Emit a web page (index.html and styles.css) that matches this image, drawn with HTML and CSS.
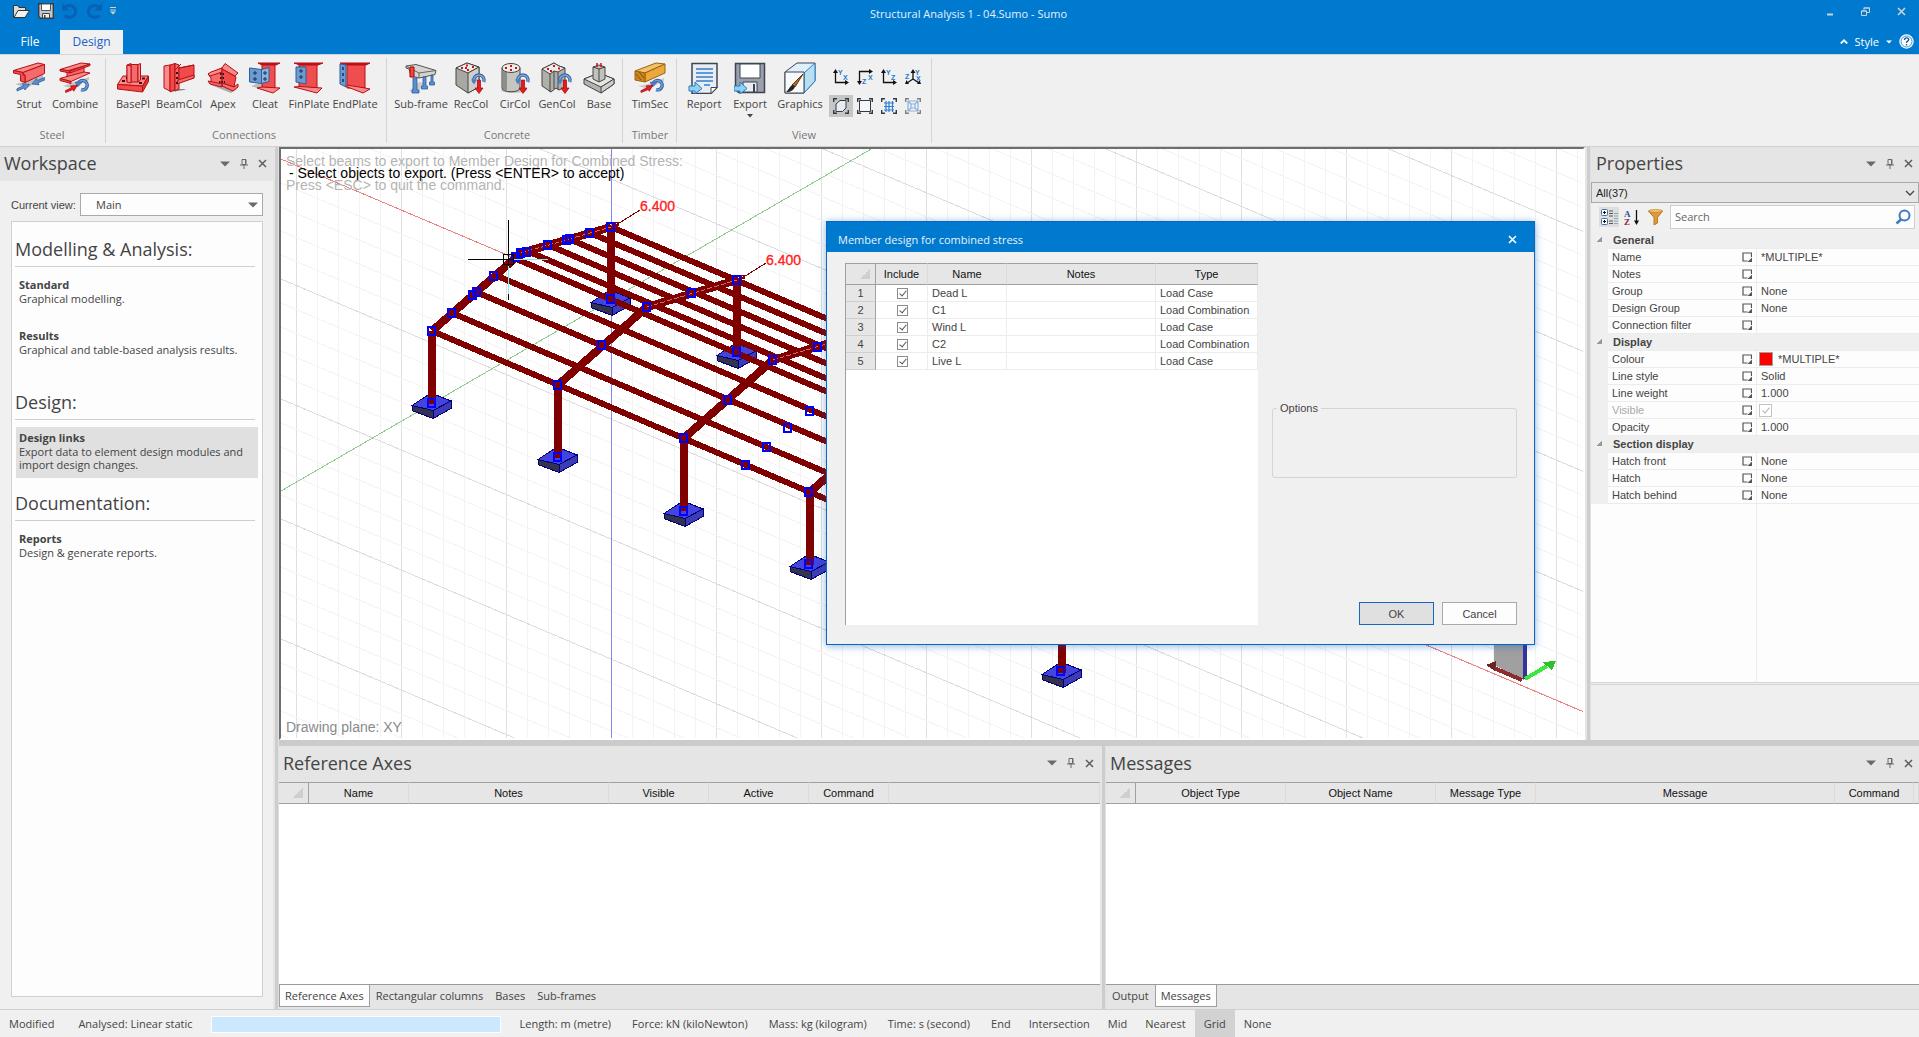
FILE: index.html
```html
<!DOCTYPE html>
<html lang="en">
<head>
<meta charset="utf-8">
<title>Structural Analysis 1 - 04.Sumo - Sumo</title>
<link rel="stylesheet" href="styles.css">
</head>
<body>
<svg class="defs" width="0" height="0" aria-hidden="true">
  <defs>
    <symbol id="i-menu" viewBox="0 0 10 6"><path d="M0 .5h10L5 5.500z" fill="#6a6a6a"/></symbol>
    <symbol id="i-pin" viewBox="0 0 8 10"><path d="M2 .5h4v5H2zM0 6h8M4 6v4M5.500 1v4" fill="none" stroke="#6a6a6a"/></symbol>
    <symbol id="i-close" viewBox="0 0 9 9"><path d="M1 1l7 7M8 1L1 8" fill="none" stroke="#5e5e5e" stroke-width="1.500"/></symbol>
    <symbol id="i-edit" viewBox="0 0 10 10"><path d="M9.500 5V1H1v8h4.500" fill="none" stroke="#555" stroke-width="1.200"/><path d="M10 5.500V10H5.500z" fill="#555"/></symbol>
    <symbol id="curl" viewBox="0 0 16 16"><path d="M3.500 6.500a5 5 0 1 1 3 7" fill="none" stroke="#2f5d9f" stroke-width="3.600"/><path d="M3.500 6.500a5 5 0 1 1 3 7" fill="none" stroke="#6b9bd8" stroke-width="1.800"/><path d="M0 5.500h7.500L3 10.500z" fill="#4c7fc4" stroke="#2f5d9f" stroke-width=".6"/></symbol>
    <symbol id="redarrow" viewBox="0 0 14 9"><path d="M.5 8.500L0 6.500 7 3 6 1l7.500-.5L9.500 7l-1-2z" fill="#e81c24" stroke="#a80008" stroke-width=".8"/></symbol>
    <symbol id="down" viewBox="0 0 16 22"><path d="M3 10a5.200 5.200 0 1 1 9.800 0" fill="none" stroke="#2f5d9f" stroke-width="3.400"/><path d="M3 10a5.200 5.200 0 1 1 9.800 0" fill="none" stroke="#78a4dc" stroke-width="1.700"/><path d="M0 7.500h6l-3 5z" fill="#4c7fc4"/><path d="M6.500 8h3v8h2.500L8 21.500 4 16h2.500z" fill="#e31b23" stroke="#a80008" stroke-width=".7"/></symbol>
    <symbol id="frame" viewBox="0 0 16 16"><path d="M.7 4V.7H4M12 .7h3.300V4M15.300 12v3.300H12M4 15.300H.7V12" fill="none" stroke="#333a44" stroke-width="1.400"/></symbol>
  </defs>
</svg>

<header class="titlebar">
  <div class="quick">
    <button aria-label="Open"><svg width="17" height="15" viewBox="0 0 17 15"><path d="M.5 13.500V1.500h4l1.500 2h6.500v3" fill="#ddd" stroke="#333"/><path d="M1 13.500L5 6.500h11.500L12 13.500z" fill="#f2f2f2" stroke="#333"/></svg></button>
    <button aria-label="Save"><svg width="16" height="16" viewBox="0 0 16 16"><path d="M.7.7h14.600v14.600H2.500L.7 13.500z" fill="#c4c8ce" stroke="#333a44" stroke-width="1.400"/><path d="M3.500 1h9v6.500h-9z" fill="#fff" stroke="#555"/><path d="M4.500 10.500h7v4.500h-7z" fill="#eee" stroke="#444"/><path d="M6 12h1.500v3H6z" fill="#444"/></svg></button>
    <button aria-label="Undo"><svg width="16" height="16" viewBox="0 0 16 16"><path d="M2.500 4.500C6 1 13.500 2 13.500 8.500S6 15.500 2.500 12.500" fill="none" stroke="#0a61b4" stroke-width="3"/><path d="M0 0v7.500h7.500z" fill="#0a61b4"/></svg></button>
    <button aria-label="Redo"><svg width="16" height="16" viewBox="0 0 16 16"><path d="M13.500 4.500C10 1 2.500 2 2.500 8.500s7.500 7 11 4" fill="none" stroke="#0a61b4" stroke-width="3"/><path d="M16 0v7.500H8.500z" fill="#0a61b4"/></svg></button>
    <button aria-label="Customise toolbar"><svg width="6" height="8" viewBox="0 0 6 8"><path d="M0 .5h6M0 3h6" stroke="#d6d0c8"/><path d="M0 4.500h6L3 7.500z" fill="#d6d0c8"/></svg></button>
  </div>
  <h1>Structural Analysis 1 - 04.Sumo - Sumo</h1>
  <div class="winbtns">
    <button aria-label="Minimise"><svg width="8" height="8" viewBox="0 0 8 8"><path d="M1 6.500h6" stroke="#c9d3dc" stroke-width="2"/></svg></button>
    <button aria-label="Restore"><svg width="9" height="9" viewBox="0 0 9 9"><path d="M.5 4h5v4.500h-5zM0 4h6M3 3V1h5.500v4.500H6M2.500 1H9" fill="none" stroke="#c9d3dc"/></svg></button>
    <button aria-label="Close"><svg width="9" height="9" viewBox="0 0 9 9"><path d="M1 1l7 7M8 1L1 8" stroke="#c9d3dc" stroke-width="1.600"/></svg></button>
  </div>
</header>
<nav class="tabs">
  <button class="tab">File</button>
  <button class="tab active">Design</button>
  <div class="tabs-right">
    <svg width="8" height="5" viewBox="0 0 8 5"><path d="M.8 4.500L4 1.300l3.200 3.200" fill="none" stroke="#fff" stroke-width="1.800"/></svg>
    <button class="style-btn">Style</button>
    <svg width="6" height="4" viewBox="0 0 6 4"><path d="M0 .5h6l-3 3z" fill="#fff"/></svg>
    <button aria-label="Help"><svg width="15" height="15" viewBox="0 0 15 15"><circle cx="7.500" cy="7.500" r="7.200" fill="#fff"/><circle cx="7.500" cy="7.500" r="5.500" fill="none" stroke="#0078d0" stroke-width=".8"/><path d="M5.500 6c0-3 4.200-2.600 4.200-.3 0 1.500-2.200 1.500-2.200 3.200M7.500 10v1.500" fill="none" stroke="#1f5c8f" stroke-width="1.400"/></svg></button>
  </div>
</nav>

<section class="ribbon">
  <div class="group steel">
    <div class="tools">
      <button class="tool"><svg width="32" height="32" viewBox="0 0 32 32"><path d="M2 22l10-2 18-8v4L14 26z" fill="#bbb"/><g stroke="#b80f14" stroke-linejoin="round"><path d="M.5 8.500L25 1l6.500 1.500L10 10.500z" fill="#f98a8a"/><path d="M10 10.500l21.500-8v9L12 20.500V13l-2 0z" fill="#f56a6a"/><path d="M.5 8.500l9.500 2V13h2v7.500l-4.500-1.500v-6.500L.5 11z" fill="#f25050"/></g><g fill="#5b8fd0" stroke="#2f5d9f" stroke-width=".8"><path d="M31.500 15.500l-7 3-1-2-4.500 5.500 7 .8-1-2 7-3z"/><path d="M4 29l7-3 1 2 4.500-5.500-7-.8 1 2-6.500 3z"/></g></svg>Strut</button>
      <button class="tool"><svg width="32" height="32" viewBox="0 0 32 32"><path d="M4 24l8-3 18-6v3L12 26z" fill="#c4c4c4"/><g stroke="#b80f14" stroke-linejoin="round"><path d="M1 7.500L22 1l9 1L11 9z" fill="#f98a8a"/><path d="M8 9l17-5v8L8 17z" fill="#f56a6a"/><path d="M1 16.500l7-2 17-4.500 6 1-19 8.500z" fill="#f98a8a"/><path d="M1 7.500l10 1.500v2L1 9zM1 16.500l11 3v2l-11-3zM11 9l20-7v1.500L11 11z" fill="#f25050"/></g><use href="#curl" x="16" y="15" width="15" height="15"/><use href="#redarrow" x="6" y="23" width="13" height="8"/></svg>Combine</button>
    </div>
    <div class="caption">Steel</div>
  </div>
  <div class="group connections">
    <div class="tools">
      <button class="tool"><svg width="32" height="32" viewBox="0 0 32 32"><g stroke="#b80f14" stroke-linejoin="round"><path d="M.5 22.500L6 14h25.500l-6 10z" fill="#f98a8a"/><path d="M.5 22.500l25 1.500v6L.5 27z" fill="#f04a4a"/><path d="M25.500 24l6-10v5.500l-6 10.500z" fill="#e03030"/><path d="M10 3l4-1.500v17L10 20z" fill="#f04a4a"/><path d="M14 2.500h7V20h-7z" fill="#f56a6a"/><path d="M10 3v17l4 1V4zM21 2.500l2.500-1V18L21 20z" fill="#f98a8a"/></g><path d="M5 19h3M25 16.500h3M22 21h3M9 16h1" stroke="#401010" stroke-width="2"/></svg>BasePl</button>
      <button class="tool"><svg width="32" height="32" viewBox="0 0 32 32"><path d="M7 30l4-3h12l-2 1z" fill="#888"/><g stroke="#b80f14" stroke-linejoin="round"><path d="M1 4l6-1v26l-6-3z" fill="#f98a8a"/><path d="M7 3l5-1.500v26L7 30z" fill="#f04a4a"/><path d="M12 1.500l4 1.500v24l-4 2z" fill="#f56a6a"/><path d="M16 6l15-3v13l-15 4z" fill="#f04a4a"/><path d="M12 8l6-6M16 6l15-3M14 22l17-6v-3l-16 5z" fill="#f56a6a"/></g><path d="M13 11h2M13 16h2M13 21h2" stroke="#301010" stroke-width="2"/></svg>BeamCol</button>
      <button class="tool narrow"><svg width="32" height="32" viewBox="0 0 32 32"><path d="M4 23l14-1 12 5-6 4z" fill="#aaa"/><g stroke="#b80f14" stroke-linejoin="round"><path d="M1 12l14-6v18L4 21v-5z" fill="#f56a6a"/><path d="M1 12l3-2 11-4v4L3 14z" fill="#f98a8a"/><path d="M15 6l3-4.500L31 11l-3 3-13-7z" fill="#f98a8a"/><path d="M15 7l14 8-2 10-12-4z" fill="#f04a4a"/><path d="M15 21l12 4 4-3v3l-5 4-11-5zM1 19l14 3v3L3 22z" fill="#f56a6a"/></g><path d="M13 12h4M13 16h4M12 20h6" stroke="#301010" stroke-width="2" stroke-dasharray="1.500 1"/></svg>Apex</button>
      <button class="tool narrow"><svg width="32" height="32" viewBox="0 0 32 32"><path d="M2 24l8-3 8 5-4 2z" fill="#bbb"/><g stroke="#b80f14" stroke-linejoin="round"><path d="M9 1h22l-4 2H13z" fill="#c01218"/><path d="M13 3h13v23H13z" fill="#f04e4e"/><path d="M8 26l5-1 18 1-7 5z" fill="#f98a8a"/></g><path d="M.5 6l12 1.500v14L.5 20z" fill="#6c9bd2" stroke="#2f5d9f"/><path d="M12.500 7.500L20 5.500v14l-7.500 2z" fill="#8bb2e0" stroke="#2f5d9f"/><path d="M6 9v4M4 11h4M6 15v4M4 17h4M16 9v4M14 11h4M16 15v4M14 17h4" stroke="#16324f"/></svg>Cleat</button>
      <button class="tool"><svg width="32" height="32" viewBox="0 0 32 32"><g stroke="#b80f14" stroke-linejoin="round"><path d="M1 1h29l-5 2H7z" fill="#c01218"/><path d="M6 3h18v23H6z" fill="#f04e4e"/><path d="M1 25l6-.5 22 1.500-5 5z" fill="#f98a8a"/></g><path d="M3 5h10v17l-10-2z" fill="#6c9bd2" stroke="#2f5d9f"/><path d="M8 7v4M6 9h4M8 13v4M6 15h4" stroke="#16324f"/></svg>FinPlate</button>
      <button class="tool"><svg width="32" height="32" viewBox="0 0 32 32"><g stroke="#b80f14" stroke-linejoin="round"><path d="M1 1h30l-4 2H8z" fill="#c01218"/><path d="M8 3h18v23H8z" fill="#f04e4e"/><path d="M8 23l-2 1 18 7 7-4-5-1z" fill="#f98a8a"/></g><path d="M1 2l6 1v22l-6-3z" fill="#6c9bd2" stroke="#2f5d9f"/><path d="M4 5v3M4 11v3M4 17v3" stroke="#16324f" stroke-width="1.500"/></svg>EndPlate</button>
    </div>
    <div class="caption">Connections</div>
  </div>
  <div class="group concrete">
    <div class="tools">
      <button class="tool wide"><svg width="32" height="32" viewBox="0 0 32 32"><path d="M4 29l10-9 6 1-8 10z" fill="#ccc"/><path d="M1 4l10-1.500 20 6-1 4-16 3.500-8-2-2-7-3-1z" fill="#d4d4d0" stroke="#555"/><path d="M1 4l13 7 17-2.500M14 11v5" stroke="#666" fill="none"/><path d="M5 5h4v10H5z" fill="#e84c3d" stroke="#a00"/><path d="M8 16h4v12h2v3H7v-3h1zM18 15h3v9h1.500v3h-6v-3H18zM26 13h2v7h1.500v3h-5v-3H26z" fill="#5b8fd0" stroke="#2f5d9f" stroke-width=".8"/></svg>Sub-frame</button>
      <button class="tool"><svg width="32" height="32" viewBox="0 0 32 32"><path d="M1 6l11-5 12 4v20l-11 6-12-8z" fill="#a8a8a2" stroke="#444"/><path d="M1 6l11-5 12 4-11 6z" fill="#ecece8" stroke="#444"/><path d="M13 11l11-6v20l-11 6z" fill="#d0d0cb" stroke="#444"/><path d="M6 6h2M11 3.500h2M17 5h2M12 8h2M10 6h2" stroke="#d01018" stroke-width="2"/><use href="#down" x="16" y="10" width="16" height="22"/></svg>RecCol</button>
      <button class="tool narrow"><svg width="32" height="32" viewBox="0 0 32 32"><ellipse cx="15" cy="28" rx="13" ry="3" fill="#c4c4c4"/><path d="M3 6v20c0 5 18 5 18 0V6z" fill="#c6c6c1" stroke="#444"/><path d="M4 9v18l4 2V10z" fill="#8e8e89"/><ellipse cx="12" cy="6" rx="9" ry="4.500" fill="#ecece8" stroke="#444"/><path d="M6 6h2M11 4h2M16 6h2M11 8h2" stroke="#d01018" stroke-width="2"/><use href="#down" x="16" y="10" width="16" height="22"/></svg>CirCol</button>
      <button class="tool narrow"><svg width="32" height="32" viewBox="0 0 32 32"><path d="M1 7l12-6 5 3 6 2v19l-6 3-3-2-5 4-9-6z" fill="#b0b0aa" stroke="#444"/><path d="M1 7l12-6 5 3 6 2-7 4-4-1-4 3z" fill="#ecece8" stroke="#444"/><path d="M9 12v18M13 9v18M17 10v18" stroke="#444" fill="none"/><path d="M6 7h2M12 4h2M17 6.500h2M9 9h2" stroke="#d01018" stroke-width="2"/><use href="#down" x="16" y="10" width="16" height="22"/></svg>GenCol</button>
      <button class="tool narrow"><svg width="32" height="32" viewBox="0 0 32 32"><path d="M1 17l15-6 15 6v5l-13 9L1 22z" fill="#b4b4ae" stroke="#444"/><path d="M1 17l15-6 15 6-13 8z" fill="#e6e6e2" stroke="#444"/><path d="M18 25l13-8v5l-13 9z" fill="#cfcfca" stroke="#444"/><path d="M10 5l6-2 6 2v12l-6 3-6-3z" fill="#c2c2bc" stroke="#444"/><path d="M10 5l6 2 6-2M16 7v13" fill="none" stroke="#444"/><path d="M14 1v4M18 1v4" stroke="#d01018" stroke-width="1.500"/></svg>Base</button>
    </div>
    <div class="caption">Concrete</div>
  </div>
  <div class="group timber">
    <div class="tools">
      <button class="tool"><svg width="32" height="32" viewBox="0 0 32 32"><path d="M4 24l10-2 16-6v3L14 27z" fill="#ccc"/><path d="M1 9l21-8 9 1-20 9z" fill="#f4c06a" stroke="#9a6210"/><path d="M11 11l20-9v9l-20 9z" fill="#eda83c" stroke="#9a6210"/><path d="M1 9l10 2v9L1 18z" fill="#c8861c" stroke="#9a6210"/><path d="M2 12l5 6M5 10l5 6" stroke="#8a5208"/><use href="#curl" x="16" y="15" width="15" height="15"/><use href="#redarrow" x="6" y="23" width="14" height="8"/></svg>TimSec</button>
    </div>
    <div class="caption">Timber</div>
  </div>
  <div class="group view">
    <div class="tools">
      <button class="tool"><svg width="32" height="32" viewBox="0 0 32 32"><path d="M4 1.500h25v24l-6 6H4z" fill="#e9edf1" stroke="#3d4552" stroke-width="1.500"/><path d="M29 25.500l-6 6v-6z" fill="#fff" stroke="#3d4552"/><path d="M8 7h17M8 11h17M8 15h17M8 19h17M16 23h6" stroke="#2f7fd0" stroke-width="1.500"/><path d="M1 24h6v-4l7 6.500L7 32v-3H1z" fill="#8fd0f5" stroke="#2a7ab8"/></svg>Report</button>
      <button class="tool"><svg width="32" height="32" viewBox="0 0 32 32"><path d="M1.500 1.500h29v29h-26l-3-3z" fill="#9aa1ab" stroke="#3d4552" stroke-width="1.500"/><path d="M6 2h20v14H6z" fill="#fff" stroke="#3d4552"/><path d="M9 20h14v10H9z" fill="#e9edf1" stroke="#3d4552"/><path d="M19 22h2v8h-2z" fill="#3d4552"/><path d="M0 24h6v-4l7 6.500L6 32v-3H0z" fill="#8fd0f5" stroke="#2a7ab8"/></svg>Export<svg class="drop" width="6" height="4" viewBox="0 0 6 4"><path d="M0 0h6L3 3.500z" fill="#444"/></svg></button>
      <button class="tool wide"><svg width="32" height="32" viewBox="0 0 32 32"><path d="M1 10L13 1h18v18l-11 12H1z" fill="#dff0fa" stroke="#3d4552"/><path d="M20 11L31 1v18L20 31z" fill="#b8def2" stroke="#2f7fd0"/><path d="M1 10h19v21H1z" fill="#f7f9fa" stroke="#3d4552"/><path d="M19 12l-8 13-3-2z" fill="#b06c28" stroke="#5a3510"/><path d="M11 24c-1 4-4 6-9 6 3-2 3-5 6-7z" fill="#222"/></svg>Graphics</button>
      <div class="small">
        <button aria-label="View XY"><svg width="16" height="16" viewBox="0 0 16 16"><path d="M2.500 2v11.500H14" fill="none" stroke="#111" stroke-width="1.300"/><path d="M0 4l2.500-4L5 4zM12 11l4 2.500-4 2.500z" fill="#111"/><text class="axis" x="5" y="6">Y</text><text class="axis" x="10" y="11">X</text></svg></button>
        <button aria-label="View XZ"><svg width="16" height="16" viewBox="0 0 16 16"><path d="M2.500 14V2.500H14" fill="none" stroke="#111" stroke-width="1.300"/><path d="M0 12l2.500 4L5 12zM12 0l4 2.500L12 5z" fill="#111"/><text class="axis" x="5" y="15">Z</text><text class="axis" x="11" y="11">X</text></svg></button>
        <button aria-label="View YZ"><svg width="16" height="16" viewBox="0 0 16 16"><path d="M2.500 2v11.500H14" fill="none" stroke="#111" stroke-width="1.300"/><path d="M0 4l2.500-4L5 4zM12 11l4 2.500-4 2.500z" fill="#111"/><text class="axis" x="5" y="6">Y</text><text class="axis" x="10" y="11">Z</text></svg></button>
        <button aria-label="View 3D"><svg width="16" height="16" viewBox="0 0 16 16"><path d="M8 2v8L2 14M8 10l6 4" fill="none" stroke="#111" stroke-width="1.300"/><path d="M5.500 4L8 0l2.500 4zM0 15l1.500-4L4 15zM16 15l-1.500-4L12 15z" fill="#111"/><text class="axis" x="10" y="6">Y</text><text class="axis" x="0" y="10">Z</text><text class="axis" x="11" y="12">X</text></svg></button>
        <button class="on" aria-label="Zoom solid"><svg width="16" height="16" viewBox="0 0 16 16"><use href="#frame"/><path d="M3 6l4-3.500h6V10l-3.500 3.500H3z" fill="#e8edf1" stroke="#333a44"/></svg></button>
        <button aria-label="Zoom extents"><svg width="16" height="16" viewBox="0 0 16 16"><use href="#frame"/><path d="M2.500 2.500h11v11h-11z" fill="#f4f6f8" stroke="#333a44"/></svg></button>
        <button aria-label="Zoom grid"><svg width="16" height="16" viewBox="0 0 16 16"><use href="#frame"/><path d="M3 5h10M3 8.500h10M3 12h10M5 3v11M8 3v11M11.500 3v11" fill="none" stroke="#2f7fd0" stroke-width="1.200"/></svg></button>
        <button aria-label="Zoom window"><svg width="16" height="16" viewBox="0 0 16 16" opacity=".6"><use href="#frame"/><path d="M3 3h10v10H3zM6 6h4v4H6zM3 3l3 3M13 3l-3 3M3 13l3-3M13 13l-3-3" fill="none" stroke="#4a8ad0" stroke-width="1.200"/></svg></button>
      </div>
    </div>
    <div class="caption">View</div>
  </div>
</section>

<main class="main">
  <aside class="workspace">
    <header class="panel-head"><h2>Workspace</h2><div class="panel-btns"><button aria-label="Menu"><svg width="10" height="6"><use href="#i-menu"/></svg></button><button aria-label="Pin"><svg width="8" height="10"><use href="#i-pin"/></svg></button><button aria-label="Close"><svg width="9" height="9"><use href="#i-close"/></svg></button></div></header>
    <div class="ws-body">
      <div class="ws-view"><label for="view">Current view:</label><div class="pick"><select id="view"><option>Main</option></select><svg width="10" height="6"><use href="#i-menu"/></svg></div></div>
      <div class="ws-box">
        <h3>Modelling &amp; Analysis:</h3>
        <a href="#" class="ws-item"><b>Standard</b>Graphical modelling.</a>
        <a href="#" class="ws-item"><b>Results</b>Graphical and table-based analysis results.</a>
        <h3 class="gap">Design:</h3>
        <a href="#" class="ws-item on"><b>Design links</b>Export data to element design modules and import design changes.</a>
        <h3>Documentation:</h3>
        <a href="#" class="ws-item"><b>Reports</b>Design &amp; generate reports.</a>
      </div>
    </div>
  </aside>
  <div class="split-v"></div>
  <div class="centre">
    <div class="upper">
      <section class="viewport">
        <svg class="scene" viewBox="281 149 1302 590" preserveAspectRatio="xMinYMin slice" shape-rendering="crispEdges">
          <defs>
            <g id="vg"><path d="M0 149v1200" stroke="#e0e0e0"/><path d="M21 149v1200M42 149v1200M63 149v1200M84 149v1200" stroke="#f3f3f3"/></g>
            <g id="dg"><path d="M281 0l2600 1103" stroke="#dcdcdc"/><path d="M281 24l2600 1103M281 48l2600 1103M281 72l2600 1103M281 96l2600 1103" stroke="#f3f3f3"/></g>
            <g id="base" stroke="#00007a">
              <path d="M-20 2.500L-1-10l20 8L1 7.500z" fill="#4444de"/>
              <path d="M-20 2.500l21 5v8l-21-8z" fill="#33334f"/>
              <path d="M1 7.500L19-2v7.500l-18 10z" fill="#3c3cb4"/>
            </g>
            <path id="node" d="M-4-4h7v8h-7z" fill="none" stroke="#0000ff" stroke-width="1.400"/>
          </defs>
          <use href="#vg" x="191"/><use href="#vg" x="296"/><use href="#vg" x="401"/><use href="#vg" x="506"/><use href="#vg" x="611"/><use href="#vg" x="716"/><use href="#vg" x="821"/><use href="#vg" x="926"/><use href="#vg" x="1031"/><use href="#vg" x="1136"/><use href="#vg" x="1241"/><use href="#vg" x="1346"/><use href="#vg" x="1451"/><use href="#vg" x="1556"/>
          <use href="#dg" y="-561"/><use href="#dg" y="-441"/><use href="#dg" y="-321"/><use href="#dg" y="-201"/><use href="#dg" y="-81"/><use href="#dg" y="39"/><use href="#dg" y="159"/><use href="#dg" y="279"/><use href="#dg" y="399"/><use href="#dg" y="519"/><use href="#dg" y="639"/>
          <path d="M281 159l1303 553" stroke="#f08080"/>
          <path d="M281 491L873 148" stroke="#90c890"/>
          <path d="M611 149v591" stroke="#8585ee"/>
          <use href="#base" x="611" y="300"/><use href="#base" x="737" y="353"/>
          <use href="#base" x="432" y="403"/><use href="#base" x="558" y="457"/><use href="#base" x="684" y="511"/><use href="#base" x="810" y="564"/><use href="#base" x="1062" y="672"/>
          <g fill="none" stroke="#800000">
            <path stroke-width="6" d="M432 331l504 215M452 313l378 161M476 292l354 151M495 275l335 143M514 258l316 135M527 251l303 129M548 245l282 120M569 239l261 111M590 233l240 102M611 227l219 93"/>
            <path stroke-width="8" d="M432 331v73M558 385v73M684 438v73M810 492v73M1062 600v73M611 227v73M737 280v73"/>
            <path stroke-width="8" d="M432 331l89-78 90-26M558 385l89-78 90-27M684 438l89-78 90-27M810 492l89-78"/>
            <path d="M616 225l24-15M742 278l24-15"/><circle cx="617" cy="224" r="2"/><circle cx="743" cy="277" r="2"/>
          </g>
          <path d="M521 253l90-26M647 307l90-27M773 360l60-18" stroke="#c87070" stroke-dasharray="5 2"/>
          <use href="#node" x="432" y="331"/><use href="#node" x="452" y="313"/><use href="#node" x="473" y="295"/><use href="#node" x="477" y="292"/><use href="#node" x="494" y="276"/><use href="#node" x="516" y="257"/><use href="#node" x="521" y="253"/><use href="#node" x="527" y="252"/><use href="#node" x="548" y="245"/><use href="#node" x="567" y="240"/><use href="#node" x="570" y="239"/><use href="#node" x="590" y="233"/><use href="#node" x="611" y="227"/>
          <use href="#node" x="558" y="385"/><use href="#node" x="602" y="345"/><use href="#node" x="647" y="307"/><use href="#node" x="692" y="293"/><use href="#node" x="737" y="280"/>
          <use href="#node" x="684" y="438"/><use href="#node" x="728" y="400"/><use href="#node" x="773" y="360"/><use href="#node" x="818" y="347"/><use href="#node" x="809" y="492"/>
          <use href="#node" x="810" y="411"/><use href="#node" x="788" y="428"/><use href="#node" x="767" y="447"/><use href="#node" x="746" y="465"/>
          <use href="#node" x="432" y="403"/><use href="#node" x="558" y="457"/><use href="#node" x="684" y="511"/><use href="#node" x="809" y="564"/><use href="#node" x="1061" y="671"/><use href="#node" x="611" y="299"/><use href="#node" x="737" y="352"/>
          <path d="M508.500 220v80M468 259.500h45M503.500 254.500h10v10h-10z" fill="none" stroke="#000"/>
          <path d="M514 259.500h34M508.500 266v28" stroke="#80f0f0"/>
          <text class="level" x="640" y="211">6.400</text><text class="level" x="766" y="265">6.400</text>
          <path d="M1494 600h30v80l-30-15z" fill="#a0a0a0"/>
          <path d="M1524.500 600v79" stroke="#34349c" stroke-width="4"/>
          <path d="M1522 680l-28-12" stroke="#8c2c2c" stroke-width="4"/><path d="M1486 665l10-4-1 10z" fill="#6a2424"/>
          <path d="M1525 679l22-13" stroke="#3ce83c" stroke-width="4"/><path d="M1556 661l-4 9-10-8z" fill="#2fc02f"/>
        </svg>
        <p class="prompt"><span>Select beams to export to Member Design for Combined Stress:</span><span class="now">- Select objects to export. (Press &lt;ENTER&gt; to accept)</span><span>Press &lt;ESC&gt; to quit the command.</span></p>
        <p class="plane">Drawing plane: XY</p>
        <div class="dialog" role="dialog" aria-labelledby="dlg-title">
          <header><h2 id="dlg-title">Member design for combined stress</h2><button aria-label="Close"><svg width="9" height="9" viewBox="0 0 9 9"><path d="M1 1l7 7M8 1L1 8" stroke="#fff" stroke-width="1.600"/></svg></button></header>
          <div class="dlg-body">
            <div class="dlg-grid">
              <table class="grid">
                <colgroup><col class="c30"><col class="c52"><col class="c79"><col class="c149"><col></colgroup>
                <thead><tr><th class="corner"></th><th>Include</th><th>Name</th><th>Notes</th><th>Type</th></tr></thead>
                <tbody>
                  <tr><th>1</th><td class="mid"><input type="checkbox" checked aria-label="Include Dead L"></td><td>Dead L</td><td></td><td>Load Case</td></tr>
                  <tr><th>2</th><td class="mid"><input type="checkbox" checked aria-label="Include C1"></td><td>C1</td><td></td><td>Load Combination</td></tr>
                  <tr><th>3</th><td class="mid"><input type="checkbox" checked aria-label="Include Wind L"></td><td>Wind L</td><td></td><td>Load Case</td></tr>
                  <tr><th>4</th><td class="mid"><input type="checkbox" checked aria-label="Include C2"></td><td>C2</td><td></td><td>Load Combination</td></tr>
                  <tr><th>5</th><td class="mid"><input type="checkbox" checked aria-label="Include Live L"></td><td>Live L</td><td></td><td>Load Case</td></tr>
                </tbody>
              </table>
            </div>
            <div class="dlg-side">
              <fieldset><legend>Options</legend></fieldset>
              <div class="dlg-btns"><button class="btn primary">OK</button><button class="btn">Cancel</button></div>
            </div>
          </div>
        </div>
      </section>
      <div class="split-v"></div>
      <aside class="props">
        <header class="panel-head"><h2>Properties</h2><div class="panel-btns"><button aria-label="Menu"><svg width="10" height="6"><use href="#i-menu"/></svg></button><button aria-label="Pin"><svg width="8" height="10"><use href="#i-pin"/></svg></button><button aria-label="Close"><svg width="9" height="9"><use href="#i-close"/></svg></button></div></header>
        <div class="pick all"><select aria-label="Selection"><option>All(37)</option></select><svg width="10" height="6" viewBox="0 0 10 6"><path d="M1 1l4 4 4-4" fill="none" stroke="#444" stroke-width="1.300"/></svg></div>
        <div class="props-tools">
          <button class="on" aria-label="Categorised"><svg width="17" height="16" viewBox="0 0 17 16"><g fill="#fff" stroke="#3a6fb0"><rect x=".5" y=".5" width="6" height="6" rx="1"/><rect x=".5" y="9.500" width="6" height="6" rx="1"/></g><path d="M2 3.500h3M3.500 2v3M2 12.500h3M3.500 11v3" stroke="#111"/><path d="M8 2h4M8 4.500h4M8 7h4M8 12h4M8 14.500h4" stroke="#555"/><path d="M13 4.500h4M13 7h4M13 9.500h4M13 12h4M13 14.500h4" stroke="#8ab"/></svg></button>
          <button aria-label="Sort alphabetically"><svg width="16" height="17" viewBox="0 0 16 17"><text class="az-a" x="0" y="8">A</text><text class="az-z" x="0" y="16">Z</text><path d="M12.500 1v13" stroke="#111" stroke-width="1.300"/><path d="M10 11.500h5L12.500 16z" fill="#111"/></svg></button>
          <button aria-label="Filter"><svg width="15" height="16" viewBox="0 0 15 16"><path d="M.5 2h14L9.500 8.500v5.500l-3.500 2V8.500z" fill="#dd9a3c" stroke="#b87820"/><ellipse cx="7.500" cy="2" rx="7" ry="1.500" fill="#f2c070" stroke="#b87820" stroke-width=".6"/></svg></button>
          <div class="search"><input type="text" placeholder="Search" aria-label="Search"><svg width="16" height="16" viewBox="0 0 16 16"><circle cx="9.500" cy="6.500" r="5" fill="none" stroke="#3f7cbf" stroke-width="2"/><path d="M6 10.500l-4.500 4" stroke="#3f7cbf" stroke-width="2.600"/></svg></div>
        </div>
        <table class="pgrid">
          <colgroup><col class="g1"><col class="g2"><col></colgroup>
          <tbody>
            <tr class="cat"><td class="exp"></td><th colspan="2">General</th></tr>
            <tr><td></td><th>Name<svg><use href="#i-edit"/></svg></th><td>*MULTIPLE*</td></tr>
            <tr><td></td><th>Notes<svg><use href="#i-edit"/></svg></th><td></td></tr>
            <tr><td></td><th>Group<svg><use href="#i-edit"/></svg></th><td>None</td></tr>
            <tr><td></td><th>Design Group<svg><use href="#i-edit"/></svg></th><td>None</td></tr>
            <tr><td></td><th>Connection filter<svg><use href="#i-edit"/></svg></th><td></td></tr>
            <tr class="cat"><td class="exp"></td><th colspan="2">Display</th></tr>
            <tr><td></td><th>Colour<svg><use href="#i-edit"/></svg></th><td class="wide-val"><i class="swatch"></i>*MULTIPLE*</td></tr>
            <tr><td></td><th>Line style<svg><use href="#i-edit"/></svg></th><td>Solid</td></tr>
            <tr><td></td><th>Line weight<svg><use href="#i-edit"/></svg></th><td>1.000</td></tr>
            <tr class="off"><td></td><th><label for="vis">Visible</label><svg><use href="#i-edit"/></svg></th><td class="wide-val"><input type="checkbox" id="vis" checked disabled></td></tr>
            <tr><td></td><th>Opacity<svg><use href="#i-edit"/></svg></th><td>1.000</td></tr>
            <tr class="cat"><td class="exp"></td><th colspan="2">Section display</th></tr>
            <tr><td></td><th>Hatch front<svg><use href="#i-edit"/></svg></th><td>None</td></tr>
            <tr><td></td><th>Hatch<svg><use href="#i-edit"/></svg></th><td>None</td></tr>
            <tr><td></td><th>Hatch behind<svg><use href="#i-edit"/></svg></th><td>None</td></tr>
          </tbody>
        </table>
        <div class="pfill"></div>
        <div class="phelp"></div>
      </aside>
    </div>
    <div class="split-h"></div>
    <div class="lower">
      <section class="dock axes">
        <header class="panel-head"><h2>Reference Axes</h2><div class="panel-btns"><button aria-label="Menu"><svg width="10" height="6"><use href="#i-menu"/></svg></button><button aria-label="Pin"><svg width="8" height="10"><use href="#i-pin"/></svg></button><button aria-label="Close"><svg width="9" height="9"><use href="#i-close"/></svg></button></div></header>
        <div class="dock-grid">
          <table class="grid"><colgroup><col class="c30"><col class="c100"><col class="c200"><col class="c100"><col class="c100"><col class="c80"><col></colgroup><thead><tr><th class="corner"></th><th>Name</th><th>Notes</th><th>Visible</th><th>Active</th><th>Command</th><th></th></tr></thead></table>
        </div>
        <div class="dock-tabs"><button class="active">Reference Axes</button><button>Rectangular columns</button><button>Bases</button><button>Sub-frames</button></div>
      </section>
      <div class="split-v"></div>
      <section class="dock messages">
        <header class="panel-head"><h2>Messages</h2><div class="panel-btns"><button aria-label="Menu"><svg width="10" height="6"><use href="#i-menu"/></svg></button><button aria-label="Pin"><svg width="8" height="10"><use href="#i-pin"/></svg></button><button aria-label="Close"><svg width="9" height="9"><use href="#i-close"/></svg></button></div></header>
        <div class="dock-grid">
          <table class="grid"><colgroup><col class="c30"><col class="c150"><col class="c150"><col class="c100"><col><col class="c79"><col class="c5"></colgroup><thead><tr><th class="corner"></th><th>Object Type</th><th>Object Name</th><th>Message Type</th><th>Message</th><th>Command</th><th></th></tr></thead></table>
        </div>
        <div class="dock-tabs"><button>Output</button><button class="active">Messages</button></div>
      </section>
    </div>
  </div>
</main>

<footer class="status">
  <span class="state">Modified</span><span class="state">Analysed: Linear static</span>
  <div class="progress"></div>
  <span class="unit">Length: m (metre)</span><span class="unit">Force: kN (kiloNewton)</span><span class="unit">Mass: kg (kilogram)</span><span class="unit">Time: s (second)</span>
  <button>End</button><button>Intersection</button><button>Mid</button><button>Nearest</button><button class="on">Grid</button><button>None</button>
</footer>
</body>
</html>
```

FILE: styles.css
```css
* { box-sizing: border-box; }

body {
  margin: 0;
  min-height: 100vh;
  display: flex;
  flex-direction: column;
  font: 11px/14px "Open Sans", "Noto Sans", sans-serif;
  color: #444;
  background: #f0f0f0;
}

h1, h2, h3, p { margin: 0; font-weight: 400; }
button {
  border: 0;
  padding: 0;
  background: none;
  font: inherit;
  color: inherit;
  white-space: nowrap;
}
svg { display: block; flex: none; }
.defs { position: absolute; }

/* title bar and tabs */
.titlebar {
  display: grid;
  grid-template-columns: 1fr auto 1fr;
  align-items: start;
  height: 30px;
  color: #e4f1fb;
  background: #007acf;
}
.titlebar h1 { padding-left: 18px; font-size: 11px; line-height: 28px; }
.quick { display: flex; align-items: center; gap: 8px; padding: 3px 0 0 13px; }
.winbtns { display: flex; justify-content: flex-end; gap: 27px; padding: 7px 13px 0 0; }
.tabs { display: flex; align-items: stretch; height: 24px; color: #fff; background: #007acf; }
.tab { width: 60px; font-size: 12px; }
.tab.active { width: 63px; color: #1a5fc8; background: #f0f0f0; }
.tabs-right { display: flex; align-items: center; gap: 7px; margin-left: auto; padding: 0 5px 1px 0; }

/* ribbon */
.ribbon { display: flex; height: 93px; padding: 3px 0; border-top: 1px solid #d4d4d4; border-bottom: 1px solid #cfcfcf; }
.group { display: flex; flex-direction: column; justify-content: space-between; padding: 4px 4px 0 4px; border-right: 1px solid #d4d4d4; }
.group.steel { padding: 4px 7px 0 6px; }
.group.connections { padding-right: 8px; }
.group.concrete { padding: 4px 2px 0 7px; }
.group.timber { padding-right: 3px; }
.tools { display: flex; align-items: flex-start; }
.tool { display: flex; flex-direction: column; align-items: center; width: 46px; gap: 3px; line-height: 14px; }
.tool.narrow { width: 42px; }
.tool.wide { width: 54px; }
.caption { padding-bottom: 1px; text-align: center; color: #777; }
.small { display: grid; grid-template-columns: repeat(4, 24px); gap: 7px 0; padding: 4px 2px 0 2px; }
.small button { display: grid; place-items: center; height: 22px; }
.small .on { background: #c6c6c6; }
.axis { font: bold 7px "Liberation Sans", sans-serif; fill: #1f78cc; }

/* panels */
.main { flex: 1; display: flex; }
.panel-head { display: flex; align-items: center; justify-content: space-between; height: 34px; padding: 0 6px 1px 4px; background: #e5e5e5; }
.panel-head h2 { font-size: 18px; line-height: 24px; padding-bottom: 1px; }
.panel-btns { display: flex; align-items: center; gap: 10px; }
.split-v { flex: none; width: 6px; border-left: 2px solid #e5e5e5; border-right: 1px solid #e0e0e0; background: #cdcdcd; }
.split-h { flex: none; height: 6px; background: #cbcbcb; }

.workspace { flex: none; width: 273px; display: flex; flex-direction: column; }
.ws-body { flex: 1; display: flex; flex-direction: column; gap: 5px; padding: 12px 10px 12px 11px; }
.ws-view { display: flex; align-items: center; justify-content: space-between; font-family: "Liberation Sans", sans-serif; }
.pick { position: relative; }
.pick svg { position: absolute; right: 5px; top: 9px; pointer-events: none; }
.pick select {
  appearance: none;
  display: block;
  width: 183px;
  height: 23px;
  padding: 0 15px;
  border: 1px solid #a9a9a9;
  border-radius: 0;
  background: #fdfdfd;
  font: 11px/14px "Open Sans", sans-serif;
  color: #444;
}
.ws-box { flex: 1; padding: 15px 4px 0 3px; border: 1px solid #d0d0d0; background: #fdfdfd; }
.ws-box h3 { margin: 0 3px 7px 0; height: 30px; border-bottom: 1px solid #cfcfcf; font-size: 18px; line-height: 24px; }
.ws-box h3.gap { margin-top: 14px; }
.ws-item { display: block; height: 51px; margin-left: 1px; padding: 4px 3px; color: #444; text-decoration: none; line-height: 13px; }
.ws-item b { display: block; line-height: 14px; }
.ws-item.on { margin-bottom: 13px; background: #e0e0e0; }

.centre { flex: 1; display: flex; flex-direction: column; min-width: 0; }
.upper { flex: 1; display: flex; }
.viewport {
  position: relative;
  flex: 1;
  min-width: 0;
  border: 2px solid #fff;
  border-top-color: #6e6e6e;
  border-left-color: #6e6e6e;
  background: #fff;
  font: 14px/12px "Liberation Sans", sans-serif;
}
.scene { position: absolute; width: 100%; height: 100%; }
.level { font: 14px "Liberation Sans", sans-serif; fill: #ff2020; stroke: #ff2020; stroke-width: .3; }
.prompt { position: absolute; left: 5px; top: 6px; color: #b4b4b4; }
.prompt span { display: block; }
.prompt .now { padding-left: 3px; color: #000; }
.plane { position: absolute; left: 5px; bottom: 5px; color: #8a8a8a; }

/* dialog window */
.dialog {
  position: absolute;
  left: 545px;
  top: 72px;
  width: 709px;
  height: 424px;
  display: flex;
  flex-direction: column;
  border: 1px solid #0a66c2;
  background: #f0f0f0;
  box-shadow: 0 1px 8px rgba(0, 90, 170, .45);
  font: 11px/14px "Liberation Sans", sans-serif;
}
.dialog header { display: flex; align-items: center; justify-content: space-between; height: 30px; padding: 5px 17px 0 11px; color: #e8f3fc; background: #007acf; }
.dialog h2 { font: 11px/14px "Open Sans", sans-serif; }
.dlg-body { flex: 1; display: flex; justify-content: space-between; padding: 11px 17px 19px 18px; }
.dlg-grid { width: 413px; border-left: 1px solid #a0a0a0; background: #fff; }
.dlg-side { width: 245px; display: flex; flex-direction: column; justify-content: space-between; }
fieldset { height: 77px; margin: 138px 0 0; border: 1px solid #d4d4d4; border-radius: 3px; padding: 0 4px; }
legend { padding: 0 3px; }
.dlg-btns { display: flex; justify-content: flex-end; gap: 8px; }
.btn { width: 75px; height: 23px; border: 1px solid #a9a9a9; background: #fdfdfd; }
.btn.primary { border-color: #1a66c4; background: #e0e0e0; }

/* data grids */
.grid { width: 100%; table-layout: fixed; border-collapse: separate; border-spacing: 0; font: 11px/14px "Liberation Sans", sans-serif; }
.grid th, .grid td { padding: 0 4px; font-weight: 400; white-space: nowrap; }
.grid thead th { height: 22px; border-top: 1px solid #a0a0a0; border-bottom: 1px solid #a0a0a0; border-right: 1px solid #dadada; color: #111; background: #e6e6e6; }
.grid thead .corner { border-right-color: #a0a0a0; background: linear-gradient(135deg, #0000 50%, #cfcfcf 50%) right 5px center / 10px 10px no-repeat #e6e6e6; }
.grid tbody th { height: 17px; border-right: 1px solid #a0a0a0; border-bottom: 1px solid #cfcfcf; background: #e6e6e6; }
.grid tbody td { border-right: 1px solid #ececec; border-bottom: 1px solid #ececec; }
.grid .mid { padding: 0 3px 0 5px; text-align: center; line-height: 12px; }
.c5 { width: 5px; } .c30 { width: 30px; } .c52 { width: 52px; } .c79 { width: 79px; } .c80 { width: 80px; }
.c100 { width: 100px; } .c149 { width: 149px; } .c150 { width: 150px; } .c200 { width: 200px; }

input[type="checkbox"] { appearance: none; display: inline-block; position: relative; width: 11px; height: 11px; margin: 0; border: 1px solid #8c8c8c; background: #fff; vertical-align: middle; }
input[type="checkbox"]::before { content: ""; position: absolute; left: 3px; top: 0; width: 3px; height: 6px; border: solid #555; border-width: 0 1px 1px 0; transform: rotate(40deg); }
input[type="checkbox"]:disabled { width: 13px; height: 13px; border-color: #c4c4c4; }
input[type="checkbox"]:disabled::before { left: 4px; top: 1px; border-color: #b0b0b0; }

/* properties */
.props { flex: none; width: 328px; display: flex; flex-direction: column; font: 11px/14px "Liberation Sans", sans-serif; }
.props h2, .dock h2 { font-family: "Open Sans", sans-serif; }
.props h2 { padding-left: 1px; }
.props .panel-head { height: 35px; padding-bottom: 2px; }
.pick.all select { width: 100%; height: 21px; padding: 0 4px; background: #e6e6e6; color: #222; font: 11px/14px "Liberation Sans", sans-serif; }
.pick.all svg { top: 8px; right: 4px; }
.props-tools { display: flex; align-items: center; gap: 1px; height: 29px; padding: 0 4px 1px 8px; }
.props-tools button { width: 20px; height: 20px; display: grid; place-items: center; }
.props-tools button + button { width: 23px; }
.props-tools .on { background: #dedede; }
.az-a { font: bold 9px "Liberation Serif", serif; fill: #28509c; }
.az-z { font: bold 9px "Liberation Serif", serif; fill: #98203c; }
.search { flex: 1; display: flex; align-items: center; height: 24px; margin-left: 2px; padding: 0 3px 0 4px; border: 1px solid #cfcfcf; background: #fdfdfd; }
.search input { flex: 1; min-width: 0; border: 0; padding: 0; background: none; font: 11px/14px "Open Sans", sans-serif; }
.search input::placeholder { color: #666; opacity: 1; }
.pgrid { width: 100%; table-layout: fixed; border-collapse: separate; border-spacing: 0; }
.g1 { width: 17px; } .g2 { width: 148px; }
.pgrid th, .pgrid td { height: 17px; padding: 0 4px; border-bottom: 1px solid #ececec; background: #fdfdfd; text-align: left; font-weight: 400; white-space: nowrap; }
.pgrid th svg { float: right; width: 10px; height: 10px; margin-top: 2px; }
.pgrid tr > td:first-child { border-color: #efefef; background: #efefef; }
.pgrid tr > td:last-child:not(:first-child) { border-left: 1px solid #ececec; }
.pgrid .cat th { padding-left: 5px; font-weight: 700; background: #efefef; }
.pgrid .exp { background: linear-gradient(135deg, #0000 50%, #999 50%) 6px 5px / 5px 5px no-repeat #efefef !important; }
.pgrid td.wide-val { padding: 0 2px; }
.off { color: #aaa; }
.swatch { display: inline-block; width: 14px; height: 14px; margin-right: 5px; border: 1px solid #a0a0a0; background: #f00; vertical-align: top; }
.pfill { flex: 1; border-bottom: 1px solid #d4d4d4; background: linear-gradient(#ececec, #ececec) 165px 0 / 1px 100% no-repeat #fdfdfd; }
.phelp { height: 56px; margin-top: 1px; border-top: 1px solid #d4d4d4; background: #efefef; }

/* lower docks */
.lower { display: flex; height: 263px; }
.dock { display: flex; flex-direction: column; min-width: 0; background: #e5e5e5; }
.dock.axes { flex: 821; }
.dock.messages { flex: 813; }
.dock .panel-head { height: 36px; padding-bottom: 2px; }
.dock-grid { flex: 1; background: #fff; }
.dock-tabs { display: flex; height: 25px; border-top: 1px solid #9a9a9a; }
.dock-tabs button { height: 22px; padding: 0 6px; }
.dock-tabs .active { height: 22px; padding: 0 5px; border: 1px solid #a0a0a0; border-top: 0; background: #fdfdfd; }

/* status bar */
.status { display: flex; align-items: stretch; height: 28px; padding-left: 9px; border-top: 1px solid #cfcfcf; line-height: 27px; white-space: nowrap; }
.state { margin-right: 24px; }
.progress { width: 290px; margin: 6px 19px 4px -6px; border: 1px solid #fdfdfd; background: #cce8ff; }
.unit { margin-right: 21px; }
.status button { padding: 0 9px; }
.unit + button { margin-left: -9px; }
.status .on { background: #d2d2d2; }
```
